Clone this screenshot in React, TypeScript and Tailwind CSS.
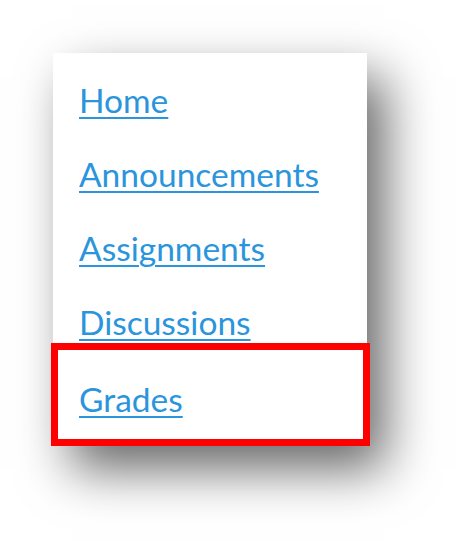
import * as React from "react";

const links = ["Home", "Announcements", "Assignments", "Discussions"];

export default function App() {
  return (
    <div className="relative h-[554px] w-[474px] bg-white" style={{ fontFamily: "Lato, 'Noto Sans', sans-serif" }}>
      <div className="pl-[53px] pt-[53px]">
        <nav className="flex h-[392px] w-[314px] flex-col bg-white pl-[26px] pt-[10px] shadow-[18px_24px_48px_rgba(0,0,0,0.6)]">
          {links.map((label) => (
            <a
              key={label}
              href="#"
              className="block text-[33.5px] leading-[74px] text-[#2a95dc] underline decoration-2 underline-offset-[4px]"
            >
              {label}
            </a>
          ))}
          <a
            href="#"
            className="block pt-[3px] text-[33.5px] leading-[74px] text-[#2a95dc] underline decoration-2 underline-offset-[4px]"
          >
            Grades
          </a>
        </nav>
      </div>
      {/* highlight annotation */}
      <div className="absolute left-[51px] top-[343px] h-[103px] w-[319px] border-[7px] border-[#ff0000]" />
    </div>
  );
}
